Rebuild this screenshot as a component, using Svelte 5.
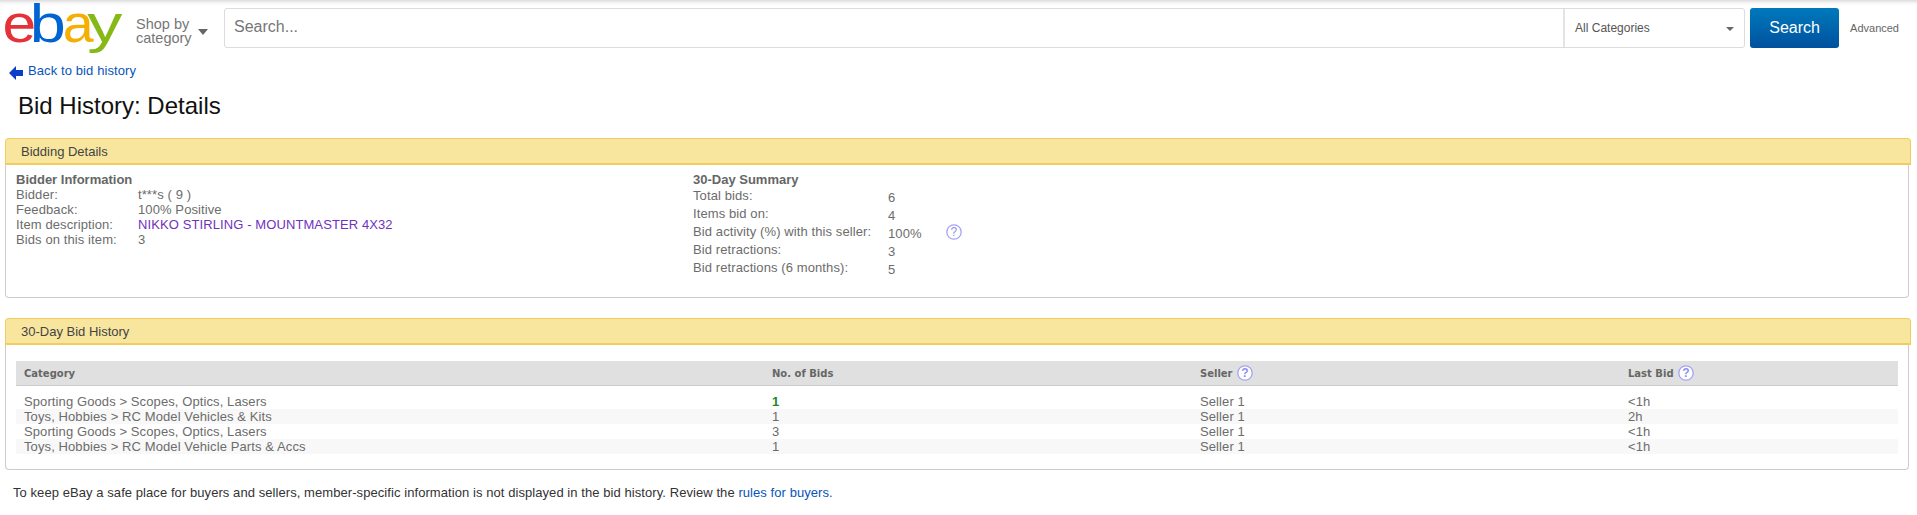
<script lang="ts">
  const bidder = [
    ['Bidder:', 't***s ( 9 )'],
    ['Feedback:', '100% Positive'],
    ['Item description:', 'NIKKO STIRLING - MOUNTMASTER 4X32'],
    ['Bids on this item:', '3']
  ];

  const summary = [
    ['Total bids:', '6', false],
    ['Items bid on:', '4', false],
    ['Bid activity (%) with this seller:', '100%', true],
    ['Bid retractions:', '3', false],
    ['Bid retractions (6 months):', '5', false]
  ];

  const rows = [
    { category: 'Sporting Goods > Scopes, Optics, Lasers', bids: '1', seller: 'Seller 1', last: '<1h', hot: true },
    { category: 'Toys, Hobbies > RC Model Vehicles & Kits', bids: '1', seller: 'Seller 1', last: '2h', hot: false },
    { category: 'Sporting Goods > Scopes, Optics, Lasers', bids: '3', seller: 'Seller 1', last: '<1h', hot: false },
    { category: 'Toys, Hobbies > RC Model Vehicle Parts & Accs', bids: '1', seller: 'Seller 1', last: '<1h', hot: false }
  ];
</script>

{#snippet help()}
  <svg class="help" viewBox="0 0 16 16" width="16" height="16" aria-hidden="true">
    <circle cx="8" cy="8" r="7.2" fill="#fff" stroke="#a3a3f5" stroke-width="1.3" />
    <text x="8" y="12.2" text-anchor="middle" class="help-mark">?</text>
  </svg>
{/snippet}

<div class="page">
  <header class="top">
    <a class="logo" href="#top">
      <svg viewBox="0 0 118 48" width="118" height="48" aria-label="eBay">
        <text transform="translate(-2.5 38) scale(1.12 1)" class="e">e</text>
        <text transform="translate(24.7 38) scale(1.2 1)" class="b">b</text>
        <text transform="translate(82.2 38) scale(1.3 1)" class="y">y</text>
        <text transform="translate(57.7 38) scale(1.03 1)" class="a">a</text>
      </svg>
    </a>
    <div class="shop">
      <span>Shop by<br />category</span>
      <i class="caret"></i>
    </div>
    <div class="search">
      <div class="query">Search...</div>
      <div class="cats"><span>All Categories</span><i class="caret small"></i></div>
    </div>
    <button class="go">Search</button>
    <a class="adv" href="#top">Advanced</a>
  </header>

  <a class="back" href="#top">
    <svg viewBox="0 0 14 14" width="14" height="14" aria-hidden="true">
      <path d="M0 7 7 0v4h7v6H7v4z" fill="#0b3fc8" />
    </svg>
    Back to bid history
  </a>

  <h1>Bid History: Details</h1>

  <section class="panel">
    <h2>Bidding Details</h2>
    <div class="body details">
      <div class="info">
        <h3>Bidder Information</h3>
        {#each bidder as [label, value], i}
          <div class="info-row">
            <span class="lbl">{label}</span>
            {#if i === 2}
              <a class="item" href="#top">{value}</a>
            {:else}
              <span>{value}</span>
            {/if}
          </div>
        {/each}
      </div>
      <div class="summary">
        <h3>30-Day Summary</h3>
        {#each summary as [label, value, hasHelp]}
          <div class="sum-row">
            <span class="sum-lbl">{label}</span>
            <span class="sum-val">{value}</span>
            {#if hasHelp}{@render help()}{/if}
          </div>
        {/each}
      </div>
    </div>
  </section>

  <section class="panel second">
    <h2>30-Day Bid History</h2>
    <div class="body history">
      <div class="grid head">
        <span>Category</span>
        <span>No. of Bids</span>
        <span class="with-help">Seller {@render help()}</span>
        <span class="with-help">Last Bid {@render help()}</span>
      </div>
      <div class="rows">
        {#each rows as row}
          <div class="grid row">
            <span>{row.category}</span>
            <span class:hot={row.hot}>{row.bids}</span>
            <span>{row.seller}</span>
            <span>{row.last}</span>
          </div>
        {/each}
      </div>
    </div>
  </section>

  <p class="note">To keep eBay a safe place for buyers and sellers, member-specific information is not displayed in the bid history. Review the <a href="#top">rules for buyers.</a></p>
</div>

<style>
  :global(body) {
    margin: 0;
    background: #fff;
    font-family: "Liberation Sans", Arial, sans-serif;
  }

  a {
    text-decoration: none;
  }

  .page {
    height: 515px;
    overflow: hidden;
    background: linear-gradient(#dcdcdc, #f6f6f6 3px, #fff 5px) no-repeat;
    background-size: 100% 6px;
  }

  .top {
    display: flex;
    align-items: flex-start;
    padding: 8px 18px 0 5px;
    height: 40px;
  }

  .logo {
    display: block;
    width: 118px;
    height: 48px;
    margin-top: -4px;
  }

  .logo svg {
    display: block;
    overflow: visible;
  }

  .logo text {
    font-family: "Liberation Sans", Arial, sans-serif;
    font-size: 54px;
  }

  .e { fill: #e53238; }
  .b { fill: #0064d2; }
  .a { fill: #f5af02; }
  .y { fill: #86b817; }

  .shop {
    display: flex;
    align-items: center;
    margin: 9px 0 0 13px;
    width: 88px;
    font-size: 14.5px;
    line-height: 14px;
    color: #767676;
  }

  .caret {
    display: block;
    width: 0;
    height: 0;
    margin: 2px 0 0 6px;
    border-style: solid;
    border-width: 6px 5.5px 0;
    border-color: #666 transparent transparent;
  }

  .caret.small {
    margin: 2px 0 0;
    border-width: 4px 4px 0;
  }

  .search {
    display: flex;
    flex: 1;
    box-sizing: border-box;
    height: 40px;
    border: 1px solid #dcdcdc;
    border-radius: 3px;
  }

  .query {
    flex: 1;
    padding-left: 9px;
    font-size: 16px;
    line-height: 36px;
    color: #767676;
  }

  .cats {
    display: flex;
    align-items: center;
    justify-content: space-between;
    box-sizing: border-box;
    width: 181px;
    padding: 0 10px 0 10px;
    border-left: 2px solid #e4e4e4;
    font-size: 12px;
    color: #555;
  }

  .go {
    width: 89px;
    height: 40px;
    margin-left: 5px;
    padding: 0;
    border: 0;
    border-radius: 3px;
    background: linear-gradient(#0079bc, #00519e);
    color: #fff;
    font-family: inherit;
    font-size: 16px;
  }

  .adv {
    margin: 14px 0 0 11px;
    font-size: 11px;
    color: #666;
  }

  .back {
    display: flex;
    align-items: center;
    gap: 5px;
    margin: 14px 0 0 9px;
    font-size: 13px;
    line-height: 14px;
    letter-spacing: 0.1px;
    color: #0654ba;
  }

  .back svg {
    margin-top: 4px;
  }

  h1 {
    margin: 11px 0 0 18px;
    font-size: 24px;
    font-weight: 400;
    line-height: 30px;
    color: #111;
  }

  .panel {
    margin: 17px 6px 0 5px;
  }

  .panel.second {
    margin-top: 20px;
  }

  h2 {
    box-sizing: border-box;
    height: 27px;
    margin: 0;
    padding-left: 15px;
    border: 1px solid #f3cc60;
    border-width: 1px 1px 2px;
    border-radius: 4px 4px 0 0;
    background: #f8e69e;
    font-size: 13px;
    font-weight: 400;
    line-height: 25px;
    color: #444;
  }

  .body {
    box-sizing: border-box;
    margin-right: 2px;
    border: 1px solid #ccc;
    border-top: 0;
    border-radius: 0 0 4px 4px;
    font-size: 13px;
    letter-spacing: 0.1px;
    color: #6c6c6c;
  }

  .details {
    display: flex;
    height: 133px;
    padding: 7px 10px 0;
  }

  .info {
    width: 677px;
    line-height: 15px;
  }

  h3 {
    margin: 0;
    font-size: 13px;
    line-height: 15px;
    letter-spacing: 0;
    color: #666;
  }

  .info-row {
    display: flex;
  }

  .lbl {
    width: 122px;
  }

  .item {
    color: #6f32c0;
  }

  .summary {
    line-height: 18px;
  }

  .sum-row {
    display: flex;
    align-items: flex-start;
    height: 18px;
  }

  .sum-lbl {
    width: 195px;
  }

  .sum-val {
    width: 58px;
    padding-top: 2px;
  }

  .summary .help {
    margin-top: 1px;
  }

  .help {
    flex: none;
  }

  .help-mark {
    font-family: "Liberation Sans", Arial, sans-serif;
    font-size: 12px;
    fill: #8f8ff0;
  }

  .history {
    height: 125px;
    padding: 16px 10px 0;
  }

  .grid {
    display: grid;
    grid-template-columns: 748px 428px 428px 1fr;
    padding-left: 8px;
  }

  .head {
    box-sizing: border-box;
    align-items: center;
    height: 25px;
    border-bottom: 1px solid #ccc;
    background: #e0e0e0;
    font-family: "DejaVu Sans", Verdana, sans-serif;
    font-size: 10px;
    font-weight: 700;
    letter-spacing: 0;
    color: #666;
  }

  .with-help {
    display: flex;
    align-items: center;
    gap: 4px;
  }

  .rows {
    padding-top: 8px;
  }

  .row {
    height: 15px;
    line-height: 15px;
  }

  .row:nth-child(even) {
    background: #f8f8f8;
  }

  .hot {
    font-weight: 700;
    color: #1c8a1c;
  }

  .note {
    margin: 15px 0 0 13px;
    font-size: 13px;
    line-height: 15px;
    letter-spacing: 0.07px;
    color: #333;
  }

  .note a {
    color: #0654ba;
  }
</style>
